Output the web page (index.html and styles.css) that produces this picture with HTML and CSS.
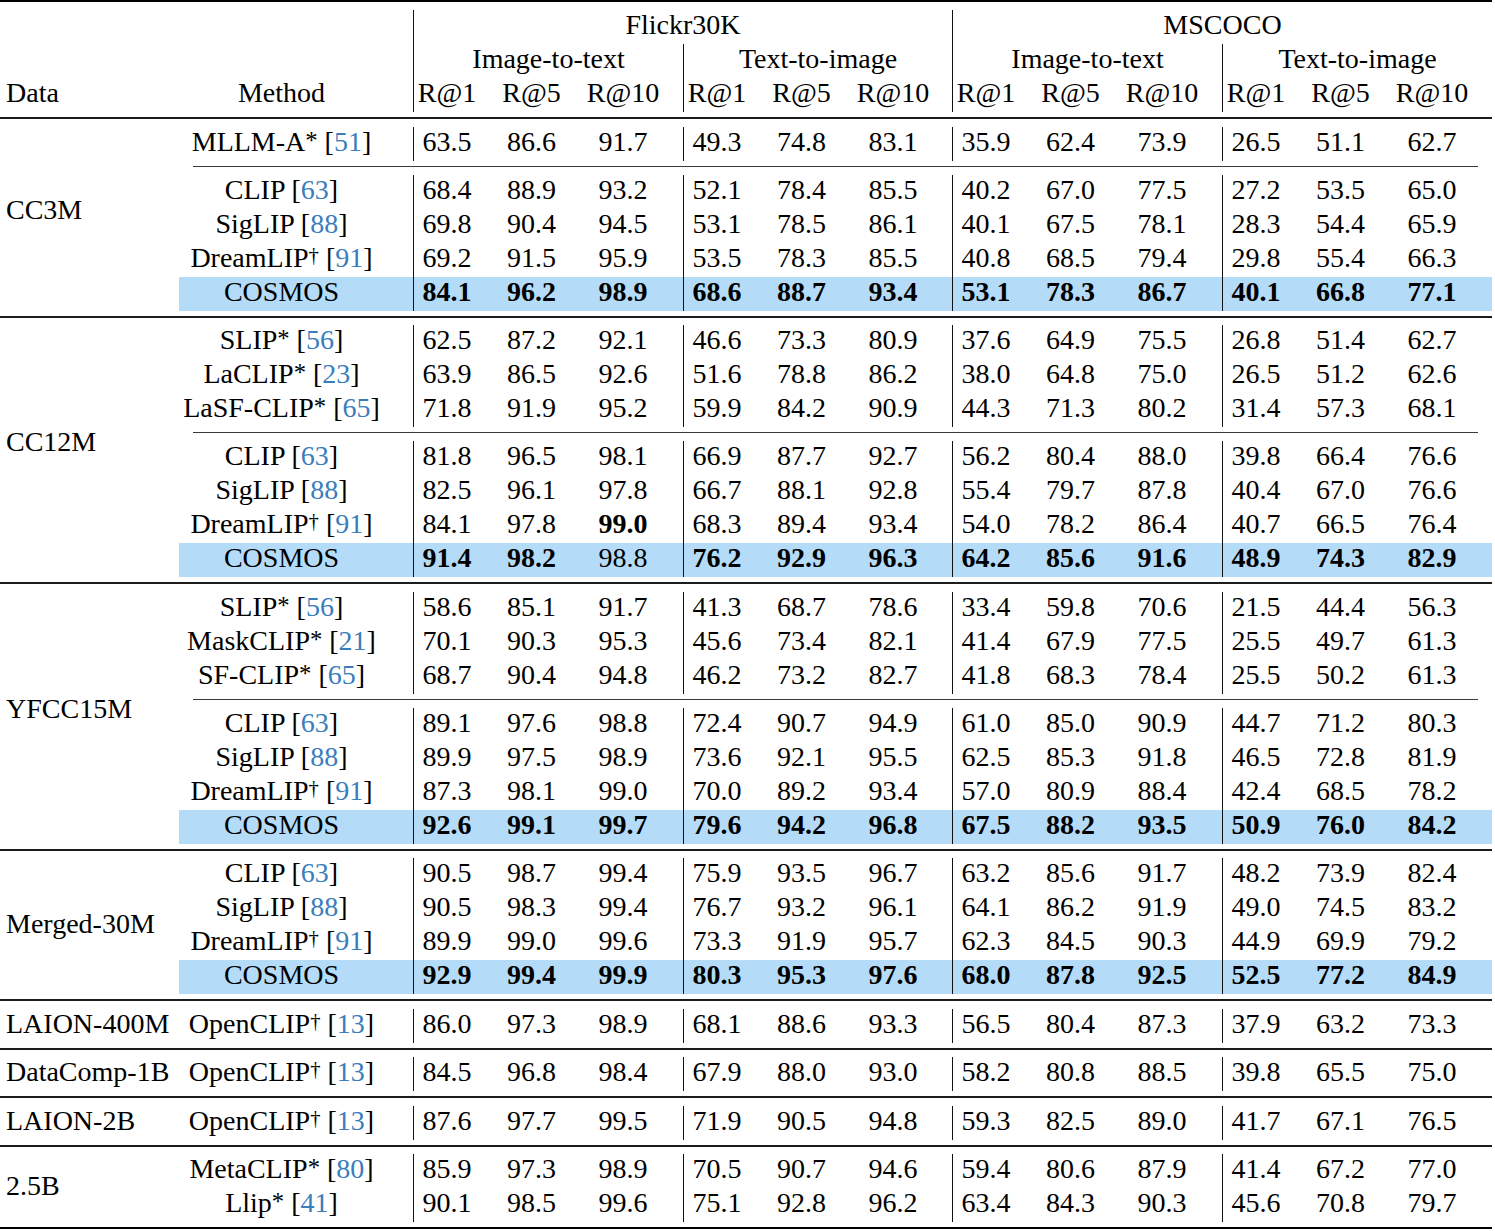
FILE: index.html
```html
<!DOCTYPE html>
<html>
<head>
<meta charset="utf-8">
<link rel="stylesheet" href="styles.css">
</head>
<body>
<div class="table">
  <div class="toprule"></div>
  <div class="head">
    <div class="head-left">
      <div class="h-data">Data</div>
      <div class="h-method">Method</div>
    </div>
    <div class="ds ds1">
      <div class="hcell">Flickr30K</div>
      <div class="subs">
        <div class="sub">
          <div class="hcell">Image-to-text</div>
          <div class="cols"><span>R@1</span><span>R@5</span><span>R@10</span></div>
        </div>
        <div class="sub sub2">
          <div class="hcell">Text-to-image</div>
          <div class="cols"><span>R@1</span><span>R@5</span><span>R@10</span></div>
        </div>
      </div>
    </div>
    <div class="ds ds2">
      <div class="hcell">MSCOCO</div>
      <div class="subs">
        <div class="sub">
          <div class="hcell">Image-to-text</div>
          <div class="cols"><span>R@1</span><span>R@5</span><span>R@10</span></div>
        </div>
        <div class="sub sub2">
          <div class="hcell">Text-to-image</div>
          <div class="cols"><span>R@1</span><span>R@5</span><span>R@10</span></div>
        </div>
      </div>
    </div>
  </div>
  <div class="midrule"></div>

  <!-- CC3M -->
  <div class="sec">
    <div class="data n5">CC3M</div>
    <div class="rows">
      <div class="row">
        <div class="m">MLLM-A<sup class="ast">*</sup> [<span class="cite">51</span>]</div>
        <div class="g"><span>63.5</span><span>86.6</span><span>91.7</span></div>
        <div class="g"><span>49.3</span><span>74.8</span><span>83.1</span></div>
        <div class="g"><span>35.9</span><span>62.4</span><span>73.9</span></div>
        <div class="g"><span>26.5</span><span>51.1</span><span>62.7</span></div>
      </div>
      <div class="cmid"></div>
      <div class="row">
        <div class="m">CLIP [<span class="cite">63</span>]</div>
        <div class="g"><span>68.4</span><span>88.9</span><span>93.2</span></div>
        <div class="g"><span>52.1</span><span>78.4</span><span>85.5</span></div>
        <div class="g"><span>40.2</span><span>67.0</span><span>77.5</span></div>
        <div class="g"><span>27.2</span><span>53.5</span><span>65.0</span></div>
      </div>
      <div class="row">
        <div class="m">SigLIP [<span class="cite">88</span>]</div>
        <div class="g"><span>69.8</span><span>90.4</span><span>94.5</span></div>
        <div class="g"><span>53.1</span><span>78.5</span><span>86.1</span></div>
        <div class="g"><span>40.1</span><span>67.5</span><span>78.1</span></div>
        <div class="g"><span>28.3</span><span>54.4</span><span>65.9</span></div>
      </div>
      <div class="row">
        <div class="m">DreamLIP<sup class="dag">†</sup> [<span class="cite">91</span>]</div>
        <div class="g"><span>69.2</span><span>91.5</span><span>95.9</span></div>
        <div class="g"><span>53.5</span><span>78.3</span><span>85.5</span></div>
        <div class="g"><span>40.8</span><span>68.5</span><span>79.4</span></div>
        <div class="g"><span>29.8</span><span>55.4</span><span>66.3</span></div>
      </div>
      <div class="row hl">
        <div class="m">COSMOS</div>
        <div class="g"><b>84.1</b><b>96.2</b><b>98.9</b></div>
        <div class="g"><b>68.6</b><b>88.7</b><b>93.4</b></div>
        <div class="g"><b>53.1</b><b>78.3</b><b>86.7</b></div>
        <div class="g"><b>40.1</b><b>66.8</b><b>77.1</b></div>
      </div>
    </div>
  </div>
  <div class="midrule"></div>

  <!-- CC12M -->
  <div class="sec">
    <div class="data n7">CC12M</div>
    <div class="rows">
      <div class="row">
        <div class="m">SLIP<sup class="ast">*</sup> [<span class="cite">56</span>]</div>
        <div class="g"><span>62.5</span><span>87.2</span><span>92.1</span></div>
        <div class="g"><span>46.6</span><span>73.3</span><span>80.9</span></div>
        <div class="g"><span>37.6</span><span>64.9</span><span>75.5</span></div>
        <div class="g"><span>26.8</span><span>51.4</span><span>62.7</span></div>
      </div>
      <div class="row">
        <div class="m">LaCLIP<sup class="ast">*</sup> [<span class="cite">23</span>]</div>
        <div class="g"><span>63.9</span><span>86.5</span><span>92.6</span></div>
        <div class="g"><span>51.6</span><span>78.8</span><span>86.2</span></div>
        <div class="g"><span>38.0</span><span>64.8</span><span>75.0</span></div>
        <div class="g"><span>26.5</span><span>51.2</span><span>62.6</span></div>
      </div>
      <div class="row">
        <div class="m">LaSF-CLIP<sup class="ast">*</sup> [<span class="cite">65</span>]</div>
        <div class="g"><span>71.8</span><span>91.9</span><span>95.2</span></div>
        <div class="g"><span>59.9</span><span>84.2</span><span>90.9</span></div>
        <div class="g"><span>44.3</span><span>71.3</span><span>80.2</span></div>
        <div class="g"><span>31.4</span><span>57.3</span><span>68.1</span></div>
      </div>
      <div class="cmid"></div>
      <div class="row">
        <div class="m">CLIP [<span class="cite">63</span>]</div>
        <div class="g"><span>81.8</span><span>96.5</span><span>98.1</span></div>
        <div class="g"><span>66.9</span><span>87.7</span><span>92.7</span></div>
        <div class="g"><span>56.2</span><span>80.4</span><span>88.0</span></div>
        <div class="g"><span>39.8</span><span>66.4</span><span>76.6</span></div>
      </div>
      <div class="row">
        <div class="m">SigLIP [<span class="cite">88</span>]</div>
        <div class="g"><span>82.5</span><span>96.1</span><span>97.8</span></div>
        <div class="g"><span>66.7</span><span>88.1</span><span>92.8</span></div>
        <div class="g"><span>55.4</span><span>79.7</span><span>87.8</span></div>
        <div class="g"><span>40.4</span><span>67.0</span><span>76.6</span></div>
      </div>
      <div class="row">
        <div class="m">DreamLIP<sup class="dag">†</sup> [<span class="cite">91</span>]</div>
        <div class="g"><span>84.1</span><span>97.8</span><b>99.0</b></div>
        <div class="g"><span>68.3</span><span>89.4</span><span>93.4</span></div>
        <div class="g"><span>54.0</span><span>78.2</span><span>86.4</span></div>
        <div class="g"><span>40.7</span><span>66.5</span><span>76.4</span></div>
      </div>
      <div class="row hl">
        <div class="m">COSMOS</div>
        <div class="g"><b>91.4</b><b>98.2</b><span>98.8</span></div>
        <div class="g"><b>76.2</b><b>92.9</b><b>96.3</b></div>
        <div class="g"><b>64.2</b><b>85.6</b><b>91.6</b></div>
        <div class="g"><b>48.9</b><b>74.3</b><b>82.9</b></div>
      </div>
    </div>
  </div>
  <div class="midrule"></div>

  <!-- YFCC15M -->
  <div class="sec">
    <div class="data n7">YFCC15M</div>
    <div class="rows">
      <div class="row">
        <div class="m">SLIP<sup class="ast">*</sup> [<span class="cite">56</span>]</div>
        <div class="g"><span>58.6</span><span>85.1</span><span>91.7</span></div>
        <div class="g"><span>41.3</span><span>68.7</span><span>78.6</span></div>
        <div class="g"><span>33.4</span><span>59.8</span><span>70.6</span></div>
        <div class="g"><span>21.5</span><span>44.4</span><span>56.3</span></div>
      </div>
      <div class="row">
        <div class="m">MaskCLIP<sup class="ast">*</sup> [<span class="cite">21</span>]</div>
        <div class="g"><span>70.1</span><span>90.3</span><span>95.3</span></div>
        <div class="g"><span>45.6</span><span>73.4</span><span>82.1</span></div>
        <div class="g"><span>41.4</span><span>67.9</span><span>77.5</span></div>
        <div class="g"><span>25.5</span><span>49.7</span><span>61.3</span></div>
      </div>
      <div class="row">
        <div class="m">SF-CLIP<sup class="ast">*</sup> [<span class="cite">65</span>]</div>
        <div class="g"><span>68.7</span><span>90.4</span><span>94.8</span></div>
        <div class="g"><span>46.2</span><span>73.2</span><span>82.7</span></div>
        <div class="g"><span>41.8</span><span>68.3</span><span>78.4</span></div>
        <div class="g"><span>25.5</span><span>50.2</span><span>61.3</span></div>
      </div>
      <div class="cmid"></div>
      <div class="row">
        <div class="m">CLIP [<span class="cite">63</span>]</div>
        <div class="g"><span>89.1</span><span>97.6</span><span>98.8</span></div>
        <div class="g"><span>72.4</span><span>90.7</span><span>94.9</span></div>
        <div class="g"><span>61.0</span><span>85.0</span><span>90.9</span></div>
        <div class="g"><span>44.7</span><span>71.2</span><span>80.3</span></div>
      </div>
      <div class="row">
        <div class="m">SigLIP [<span class="cite">88</span>]</div>
        <div class="g"><span>89.9</span><span>97.5</span><span>98.9</span></div>
        <div class="g"><span>73.6</span><span>92.1</span><span>95.5</span></div>
        <div class="g"><span>62.5</span><span>85.3</span><span>91.8</span></div>
        <div class="g"><span>46.5</span><span>72.8</span><span>81.9</span></div>
      </div>
      <div class="row">
        <div class="m">DreamLIP<sup class="dag">†</sup> [<span class="cite">91</span>]</div>
        <div class="g"><span>87.3</span><span>98.1</span><span>99.0</span></div>
        <div class="g"><span>70.0</span><span>89.2</span><span>93.4</span></div>
        <div class="g"><span>57.0</span><span>80.9</span><span>88.4</span></div>
        <div class="g"><span>42.4</span><span>68.5</span><span>78.2</span></div>
      </div>
      <div class="row hl">
        <div class="m">COSMOS</div>
        <div class="g"><b>92.6</b><b>99.1</b><b>99.7</b></div>
        <div class="g"><b>79.6</b><b>94.2</b><b>96.8</b></div>
        <div class="g"><b>67.5</b><b>88.2</b><b>93.5</b></div>
        <div class="g"><b>50.9</b><b>76.0</b><b>84.2</b></div>
      </div>
    </div>
  </div>
  <div class="midrule"></div>

  <!-- Merged-30M -->
  <div class="sec">
    <div class="data n4">Merged-30M</div>
    <div class="rows">
      <div class="row">
        <div class="m">CLIP [<span class="cite">63</span>]</div>
        <div class="g"><span>90.5</span><span>98.7</span><span>99.4</span></div>
        <div class="g"><span>75.9</span><span>93.5</span><span>96.7</span></div>
        <div class="g"><span>63.2</span><span>85.6</span><span>91.7</span></div>
        <div class="g"><span>48.2</span><span>73.9</span><span>82.4</span></div>
      </div>
      <div class="row">
        <div class="m">SigLIP [<span class="cite">88</span>]</div>
        <div class="g"><span>90.5</span><span>98.3</span><span>99.4</span></div>
        <div class="g"><span>76.7</span><span>93.2</span><span>96.1</span></div>
        <div class="g"><span>64.1</span><span>86.2</span><span>91.9</span></div>
        <div class="g"><span>49.0</span><span>74.5</span><span>83.2</span></div>
      </div>
      <div class="row">
        <div class="m">DreamLIP<sup class="dag">†</sup> [<span class="cite">91</span>]</div>
        <div class="g"><span>89.9</span><span>99.0</span><span>99.6</span></div>
        <div class="g"><span>73.3</span><span>91.9</span><span>95.7</span></div>
        <div class="g"><span>62.3</span><span>84.5</span><span>90.3</span></div>
        <div class="g"><span>44.9</span><span>69.9</span><span>79.2</span></div>
      </div>
      <div class="row hl">
        <div class="m">COSMOS</div>
        <div class="g"><b>92.9</b><b>99.4</b><b>99.9</b></div>
        <div class="g"><b>80.3</b><b>95.3</b><b>97.6</b></div>
        <div class="g"><b>68.0</b><b>87.8</b><b>92.5</b></div>
        <div class="g"><b>52.5</b><b>77.2</b><b>84.9</b></div>
      </div>
    </div>
  </div>
  <div class="midrule"></div>

  <!-- LAION-400M -->
  <div class="sec">
    <div class="data">LAION-400M</div>
    <div class="rows">
      <div class="row">
        <div class="m">OpenCLIP<sup class="dag">†</sup> [<span class="cite">13</span>]</div>
        <div class="g"><span>86.0</span><span>97.3</span><span>98.9</span></div>
        <div class="g"><span>68.1</span><span>88.6</span><span>93.3</span></div>
        <div class="g"><span>56.5</span><span>80.4</span><span>87.3</span></div>
        <div class="g"><span>37.9</span><span>63.2</span><span>73.3</span></div>
      </div>
    </div>
  </div>
  <div class="midrule"></div>

  <!-- DataComp-1B -->
  <div class="sec">
    <div class="data">DataComp-1B</div>
    <div class="rows">
      <div class="row">
        <div class="m">OpenCLIP<sup class="dag">†</sup> [<span class="cite">13</span>]</div>
        <div class="g"><span>84.5</span><span>96.8</span><span>98.4</span></div>
        <div class="g"><span>67.9</span><span>88.0</span><span>93.0</span></div>
        <div class="g"><span>58.2</span><span>80.8</span><span>88.5</span></div>
        <div class="g"><span>39.8</span><span>65.5</span><span>75.0</span></div>
      </div>
    </div>
  </div>
  <div class="midrule"></div>

  <!-- LAION-2B -->
  <div class="sec">
    <div class="data">LAION-2B</div>
    <div class="rows">
      <div class="row">
        <div class="m">OpenCLIP<sup class="dag">†</sup> [<span class="cite">13</span>]</div>
        <div class="g"><span>87.6</span><span>97.7</span><span>99.5</span></div>
        <div class="g"><span>71.9</span><span>90.5</span><span>94.8</span></div>
        <div class="g"><span>59.3</span><span>82.5</span><span>89.0</span></div>
        <div class="g"><span>41.7</span><span>67.1</span><span>76.5</span></div>
      </div>
    </div>
  </div>
  <div class="midrule"></div>

  <!-- 2.5B -->
  <div class="sec">
    <div class="data n2">2.5B</div>
    <div class="rows">
      <div class="row">
        <div class="m">MetaCLIP<sup class="ast">*</sup> [<span class="cite">80</span>]</div>
        <div class="g"><span>85.9</span><span>97.3</span><span>98.9</span></div>
        <div class="g"><span>70.5</span><span>90.7</span><span>94.6</span></div>
        <div class="g"><span>59.4</span><span>80.6</span><span>87.9</span></div>
        <div class="g"><span>41.4</span><span>67.2</span><span>77.0</span></div>
      </div>
      <div class="row">
        <div class="m">Llip<sup class="ast">*</sup> [<span class="cite">41</span>]</div>
        <div class="g"><span>90.1</span><span>98.5</span><span>99.6</span></div>
        <div class="g"><span>75.1</span><span>92.8</span><span>96.2</span></div>
        <div class="g"><span>63.4</span><span>84.3</span><span>90.3</span></div>
        <div class="g"><span>45.6</span><span>70.8</span><span>79.7</span></div>
      </div>
    </div>
  </div>
  <div class="bottomrule"></div>
</div>
</body>
</html>
```

FILE: styles.css
```css
* {
  box-sizing: border-box;
  margin: 0;
  padding: 0;
}

body {
  margin: 0;
  background: #ffffff;
  color: #000000;
  font-family: "Liberation Serif", "Times New Roman", serif;
  font-size: 28px;
}

.table {
  width: 1492px;
}

.toprule {
  height: 2px;
  background: #000;
  margin-bottom: 8px;
}

.midrule {
  height: 2px;
  background: #1c1c1c;
  margin: 5px 0 7.5px;
}

.cmid {
  height: 1px;
  background: #3a3a3a;
  margin: 5px 14px 8px;
}

.bottomrule {
  height: 2px;
  background: #000;
  margin-top: 5px;
}

/* header */
.head {
  display: flex;
}

.head-left {
  width: 413px;
  display: flex;
  align-items: flex-end;
}

.hcell,
.h-data,
.h-method {
  height: 34px;
  line-height: 29px;
  padding-bottom: 5px;
  white-space: nowrap;
}

.h-data {
  width: 179px;
  padding-left: 6px;
}

.h-method {
  width: 234px;
  padding-right: 29px;
  text-align: center;
}

.ds {
  border-left: 1px solid #111;
}

.ds1 {
  width: 539px;
}

.ds2 {
  width: 540px;
}

.hcell {
  text-align: center;
}

.subs {
  display: flex;
}

.sub {
  width: 269px;
}

.ds2 .sub2 {
  width: 270px;
}

.sub2 {
  border-left: 1px solid #111;
}

.cols,
.g {
  display: grid;
  grid-template-columns: 66px 103px 80px 1fr;
  height: 34px;
  line-height: 29px;
  padding-bottom: 5px;
  white-space: nowrap;
}

.cols span,
.g span,
.g b {
  text-align: center;
}

/* body */
.sec {
  display: flex;
}

.data {
  width: 179px;
  padding-left: 6px;
  line-height: 29px;
  white-space: nowrap;
}

.n2 { padding-top: 17px; }
.n4 { padding-top: 51px; }
.n5 { padding-top: 68px; }
.n7 { padding-top: 102px; }

.rows {
  width: 1313px;
  display: flex;
  flex-direction: column;
}

.row {
  display: grid;
  grid-template-columns: 234px 270px 269px 270px 270px;
  height: 34px;
}

.row.hl {
  background: #b4dcf8;
}

.m {
  padding-right: 29px;
  text-align: center;
  line-height: 29px;
  white-space: nowrap;
}

.g {
  border-left: 1px solid #111;
}

.g b {
  font-weight: bold;
}

.cite {
  color: #3a7dbc;
}

sup {
  line-height: 0;
}

.ast {
  font-size: 0.88em;
  vertical-align: 0.1em;
}

.dag {
  font-size: 0.74em;
  vertical-align: 0.26em;
}
```
